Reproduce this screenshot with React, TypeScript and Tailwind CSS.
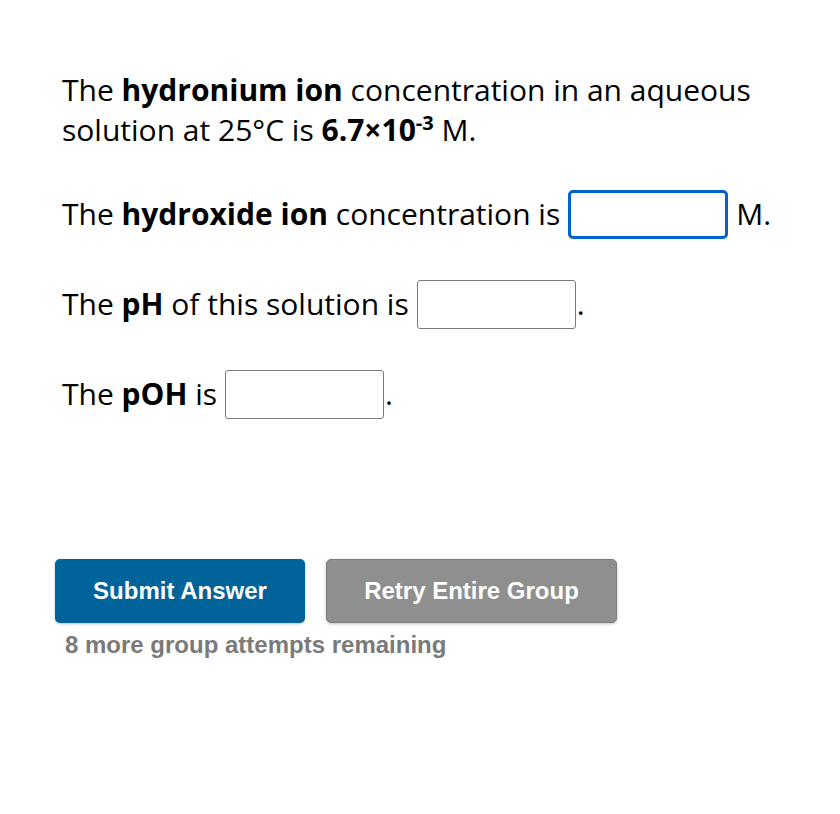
const inputBox = "inline-block w-[159px] h-[49px] rounded-[3px] border-[1.5px] border-[#7a7a7a] bg-white";

export default function App() {
  return (
    <div className="w-[840px] h-[814px] bg-white text-black" style={{ fontFamily: '"Open Sans", sans-serif' }}>
      <div className="pl-[62px] pt-[70px] text-[30px] leading-[40px]">
        <p>
          The <b>hydronium ion</b> concentration in an aqueous
          <br />
          solution at 25°C is{" "}
          <b>
            6.7×10<sup className="text-[20px] top-[-0.55em]">-3</sup>
          </b>{" "}
          M.
        </p>

        <div className="mt-[39px] flex items-center h-[50px]">
          <span>
            The <b>hydroxide ion</b> concentration is
          </span>
          <span className="ml-[8px] inline-block w-[160px] h-[49px] rounded-[5px] border-[3px] border-[#0062cc] bg-white" />
          <span className="ml-[8px]">M.</span>
        </div>

        <div className="mt-[40px] flex items-center h-[50px]">
          <span>
            The <b>pH</b> of this solution is
          </span>
          <span className={"ml-[8px] " + inputBox} />
          <span className="ml-[1px]">.</span>
        </div>

        <div className="mt-[40px] flex items-center h-[50px]">
          <span>
            The <b>pOH</b> is
          </span>
          <span className={"ml-[8px] " + inputBox} />
          <span className="ml-[1px]">.</span>
        </div>
      </div>

      <div className="pl-[55px] mt-[140px]" style={{ fontFamily: '"Liberation Sans", Arial, sans-serif' }}>
        <div className="flex gap-[21px]">
          <button className="w-[250px] h-[64px] rounded-[5px] bg-[#00639a] text-white font-bold text-[24px] shadow-[0_1px_3px_rgba(0,0,0,0.25)]">
            Submit Answer
          </button>
          <button className="w-[291px] h-[64px] rounded-[5px] bg-[#8f8f8f] border border-[#7d7d7d] text-white font-bold text-[24px] shadow-[0_1px_3px_rgba(0,0,0,0.25)]">
            Retry Entire Group
          </button>
        </div>
        <p className="mt-[7px] pl-[10px] text-[24px] leading-[30px] font-bold text-[#7a7a7a]">8 more group attempts remaining</p>
      </div>
    </div>
  );
}
